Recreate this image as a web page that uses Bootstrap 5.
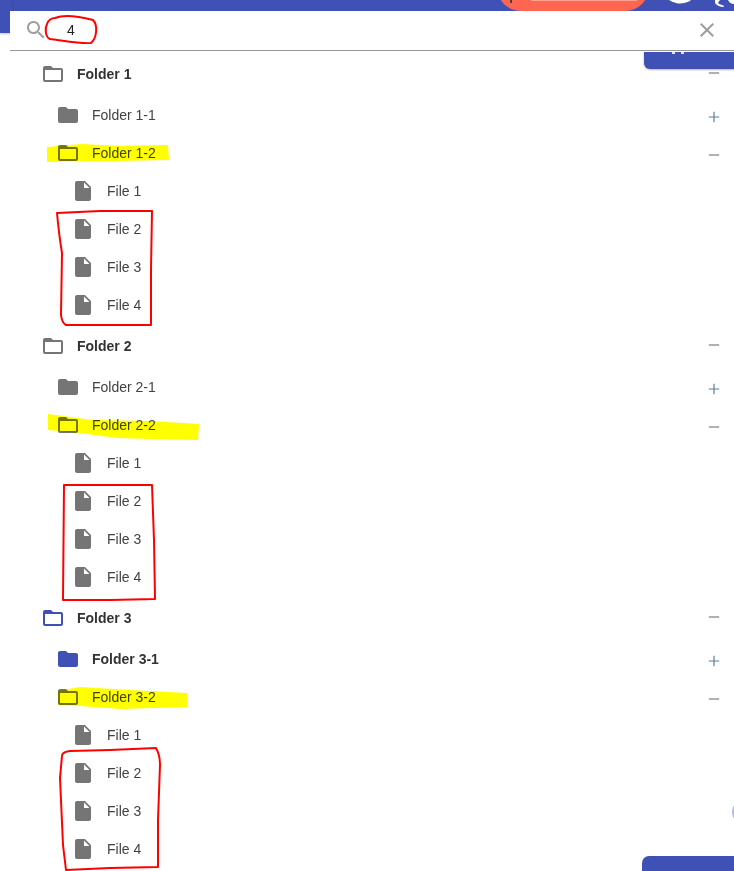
<!DOCTYPE html>
<html lang="en">
<head>
<meta charset="utf-8">
<title>Tree search</title>
<link href="https://cdn.jsdelivr.net/npm/bootstrap@5.3.0/dist/css/bootstrap.min.css" rel="stylesheet">
<style>
html,body{margin:0;background:#fff;}
.shell{position:relative;width:734px;height:871px;overflow:hidden;background:#fff;font-family:"Liberation Sans",Arial,sans-serif;font-size:14px;color:#424242;}
.top-band{position:absolute;left:0;top:0;width:100%;height:11px;background:#3f51b5;}
.left-tab{position:absolute;left:0;top:0;width:12px;height:33px;background:#3f51b5;box-shadow:0 1px 2px rgba(0,0,0,.25);}
.pill-cta{position:absolute;left:497px;top:-30px;width:152px;height:41px;border-radius:0 0 24px 24px;background:#ff6651;}
.pill-mark{position:absolute;left:13px;bottom:8px;width:2px;height:3px;background:#5a3a35;}
.pill-txt{position:absolute;left:34px;bottom:10px;width:106px;height:1px;background:#ffa192;}
.soc-icons{position:absolute;left:660px;top:0;width:74px;height:12px;}
.soc-icons path{fill:#fff;}
.panel{position:relative;z-index:1;margin:11px 0 0 10px;}
.search-bar{height:40px;margin-bottom:1px;background:#fff;border-bottom:1px solid #999;padding:0 15px 1px 14px;}
.search-val{margin-left:19px;color:#212121;line-height:1;}
.icn{width:24px;height:24px;flex:none;display:block;}
.tone-grey{fill:#757575;}
.tone-blue{fill:#3f51b5;}
.tone-soft{fill:#9e9e9e;}
.tree-list{--bs-list-group-bg:transparent;--bs-list-group-border-width:0;--bs-list-group-color:#424242;}
.tree-row{height:38px;padding:0 8px 0 0;gap:12px;font-size:14px;}
.tree-row.head{height:44px;padding-left:31px;font-weight:700;color:#333;}
.tree-row.sub{padding-left:46px;}
.tree-row.leaf{padding-left:61px;}
.strong-row{font-weight:700;color:#333;}
.tgl{stroke:#7d7d7d;stroke-width:1.2;fill:none;}
.tgl.plus{stroke:#5f7f9f;}
.tgl-head{margin-top:-2px;}
.tgl-sub{margin-top:4px;}
.card-top{position:absolute;z-index:2;left:644px;top:52px;width:92px;height:17px;background:#3f51b5;border-radius:0 0 0 6px;box-shadow:0 1px 2px rgba(0,0,0,.3);}
.card-dot{position:absolute;top:0;width:3px;height:2px;background:#dfe3f5;}
.card-bottom{position:absolute;z-index:2;left:642px;top:856px;width:94px;height:20px;background:#3f51b5;border-radius:7px 0 0 0;}
.side-round{position:absolute;z-index:2;left:732px;top:800px;width:24px;height:24px;border-radius:50%;background:#b3b9e1;}
.mark-yellow,.mark-red{position:absolute;left:0;top:0;width:734px;height:871px;pointer-events:none;z-index:5;}
.mark-yellow{mix-blend-mode:multiply;}
.mark-yellow path{fill:#ffff00;}
.mark-red path{fill:none;stroke:#ff0000;stroke-width:2;stroke-linejoin:round;stroke-linecap:round;}
</style>
</head>
<body>
<svg width="0" height="0" class="position-absolute">
  <symbol id="i-open" viewBox="0 0 24 24"><path d="M20 6h-8l-2-2H4c-1.1 0-1.99.9-1.99 2L2 18c0 1.1.9 2 2 2h16c1.1 0 2-.9 2-2V8c0-1.1-.9-2-2-2zm0 12H4V8h16v10z"/></symbol>
  <symbol id="i-solid" viewBox="0 0 24 24"><path d="M10 4H4c-1.1 0-1.99.9-1.99 2L2 18c0 1.1.9 2 2 2h16c1.1 0 2-.9 2-2V8c0-1.1-.9-2-2-2h-8l-2-2z"/></symbol>
  <symbol id="i-file" viewBox="0 0 24 24"><path d="M6 2c-1.1 0-1.99.9-1.99 2L4 20c0 1.1.89 2 1.99 2H18c1.1 0 2-.9 2-2V8l-6-6H6zm7 7V3.5L18.5 9H13z"/></symbol>
  <symbol id="i-minus" viewBox="0 0 24 24"><path d="M6.8 12h10.4"/></symbol>
  <symbol id="i-plus" viewBox="0 0 24 24"><path d="M6.8 12h10.4M12 6.8v10.4"/></symbol>
</svg>

<div class="shell">
  <div class="top-band"></div>
  <div class="left-tab"></div>
  <div class="pill-cta"><span class="pill-mark"></span><span class="pill-txt"></span></div>
  <svg class="soc-icons" viewBox="0 0 74 12">
    <path d="M9 0 H31 L29 1.5 Q22 4.5 16 3 Q12 2 9 0 Z"/>
    <path d="M55 0 H60 Q57 3 59 4 L62 5 Q64 5 64 7 Q58 7 55 3 Z"/>
    <path d="M68 0 H74 V4 Q70 4 68 0 Z"/>
  </svg>

  <div class="panel">
    <div class="search-bar d-flex align-items-center">
      <svg class="icn tone-soft" viewBox="0 0 24 24"><path d="M15.5 14h-.79l-.28-.27C15.41 12.59 16 11.11 16 9.5 16 5.91 13.09 3 9.5 3S3 5.91 3 9.5 5.91 16 9.5 16c1.61 0 3.09-.59 4.23-1.57l.27.28v.79l5 4.99L20.49 19l-4.99-5zm-6 0C7.01 14 5 11.99 5 9.5S7.01 5 9.5 5 14 7.01 14 9.5 11.99 14 9.5 14z"/></svg>
      <span class="search-val">4</span>
      <svg class="icn ms-auto tone-soft" viewBox="0 0 24 24"><path d="M19 6.41 17.59 5 12 10.59 6.41 5 5 6.41 10.59 12 5 17.59 6.41 19 12 13.41 17.59 19 19 17.59 13.41 12z"/></svg>
    </div>

    <div class="list-group list-group-flush tree-list">
      <div class="list-group-item tree-row head d-flex align-items-center"><svg class="icn tone-grey"><use href="#i-open"/></svg><span>Folder 1</span><svg class="icn ms-auto tgl tgl-head"><use href="#i-minus"/></svg></div>
      <div class="list-group-item tree-row sub d-flex align-items-center"><svg class="icn tone-grey"><use href="#i-solid"/></svg><span>Folder 1-1</span><svg class="icn ms-auto tgl plus tgl-sub"><use href="#i-plus"/></svg></div>
      <div class="list-group-item tree-row sub d-flex align-items-center"><svg class="icn tone-grey"><use href="#i-open"/></svg><span>Folder 1-2</span><svg class="icn ms-auto tgl tgl-sub"><use href="#i-minus"/></svg></div>
      <div class="list-group-item tree-row leaf d-flex align-items-center"><svg class="icn tone-grey"><use href="#i-file"/></svg><span>File 1</span></div>
      <div class="list-group-item tree-row leaf d-flex align-items-center"><svg class="icn tone-grey"><use href="#i-file"/></svg><span>File 2</span></div>
      <div class="list-group-item tree-row leaf d-flex align-items-center"><svg class="icn tone-grey"><use href="#i-file"/></svg><span>File 3</span></div>
      <div class="list-group-item tree-row leaf d-flex align-items-center"><svg class="icn tone-grey"><use href="#i-file"/></svg><span>File 4</span></div>

      <div class="list-group-item tree-row head d-flex align-items-center"><svg class="icn tone-grey"><use href="#i-open"/></svg><span>Folder 2</span><svg class="icn ms-auto tgl tgl-head"><use href="#i-minus"/></svg></div>
      <div class="list-group-item tree-row sub d-flex align-items-center"><svg class="icn tone-grey"><use href="#i-solid"/></svg><span>Folder 2-1</span><svg class="icn ms-auto tgl plus tgl-sub"><use href="#i-plus"/></svg></div>
      <div class="list-group-item tree-row sub d-flex align-items-center"><svg class="icn tone-grey"><use href="#i-open"/></svg><span>Folder 2-2</span><svg class="icn ms-auto tgl tgl-sub"><use href="#i-minus"/></svg></div>
      <div class="list-group-item tree-row leaf d-flex align-items-center"><svg class="icn tone-grey"><use href="#i-file"/></svg><span>File 1</span></div>
      <div class="list-group-item tree-row leaf d-flex align-items-center"><svg class="icn tone-grey"><use href="#i-file"/></svg><span>File 2</span></div>
      <div class="list-group-item tree-row leaf d-flex align-items-center"><svg class="icn tone-grey"><use href="#i-file"/></svg><span>File 3</span></div>
      <div class="list-group-item tree-row leaf d-flex align-items-center"><svg class="icn tone-grey"><use href="#i-file"/></svg><span>File 4</span></div>

      <div class="list-group-item tree-row head d-flex align-items-center"><svg class="icn tone-blue"><use href="#i-open"/></svg><span>Folder 3</span><svg class="icn ms-auto tgl tgl-head"><use href="#i-minus"/></svg></div>
      <div class="list-group-item tree-row sub strong-row d-flex align-items-center"><svg class="icn tone-blue"><use href="#i-solid"/></svg><span>Folder 3-1</span><svg class="icn ms-auto tgl plus tgl-sub"><use href="#i-plus"/></svg></div>
      <div class="list-group-item tree-row sub d-flex align-items-center"><svg class="icn tone-grey"><use href="#i-open"/></svg><span>Folder 3-2</span><svg class="icn ms-auto tgl tgl-sub"><use href="#i-minus"/></svg></div>
      <div class="list-group-item tree-row leaf d-flex align-items-center"><svg class="icn tone-grey"><use href="#i-file"/></svg><span>File 1</span></div>
      <div class="list-group-item tree-row leaf d-flex align-items-center"><svg class="icn tone-grey"><use href="#i-file"/></svg><span>File 2</span></div>
      <div class="list-group-item tree-row leaf d-flex align-items-center"><svg class="icn tone-grey"><use href="#i-file"/></svg><span>File 3</span></div>
      <div class="list-group-item tree-row leaf d-flex align-items-center"><svg class="icn tone-grey"><use href="#i-file"/></svg><span>File 4</span></div>
    </div>
  </div>

  <div class="card-top"><span class="card-dot" style="left:28px"></span><span class="card-dot" style="left:37px"></span></div>
  <div class="side-round"></div>
  <div class="card-bottom"></div>

  <svg class="mark-yellow" viewBox="0 0 734 871">
    <path d="M47 147 L58 146 L82 144 L120 146 L168 145 L169 160 L117 161 L82 161 L47 162 Z"/>
    <path d="M48 414 L92 420 L150 421 L199 424 L198 440 L150 439 L117 438 L80 433 L48 430 Z"/>
    <path d="M58 691 L80 687 L130 690 L187 693 L187 707 L120 709 L80 706 L58 705 Z"/>
  </svg>
  <svg class="mark-red" viewBox="0 0 734 871">
    <path d="M55 18 C65 14 85 18 93 20 C98 25 97 38 91 43 C80 44 60 40 50 39 C45 37 45 28 47 24 C48 20 52 18 55 18 Z"/>
    <path d="M57 213 L100 211 L152 211 L151 270 L151 325 L100 325 L66 325 Q62 323 61 315 L62 253 Q59 235 57 213 Z"/>
    <path d="M64 485 L152 485 L154 540 L155 599 L110 600 L63 600 Z"/>
    <path d="M62 756 Q62 752 70 751 L110 750 L156 748 Q160 755 160 765 L158 820 L158 867 L110 868 L66 870 L63 845 L60 778 Z"/>
  </svg>
</div>
<script src="https://cdn.jsdelivr.net/npm/bootstrap@5.3.0/dist/js/bootstrap.bundle.min.js"></script>
</body>
</html>
